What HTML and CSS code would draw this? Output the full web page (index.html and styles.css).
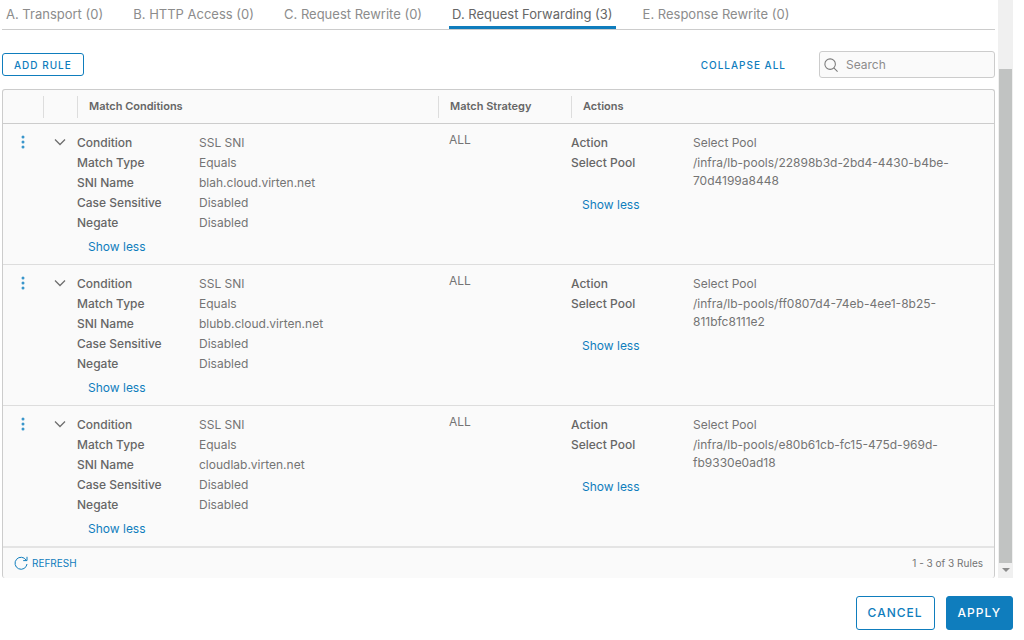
FILE: index.html
```html
<!DOCTYPE html>
<html lang="en">
<head>
    <meta charset="UTF-8">
    <meta name="viewport" content="width=device-width, initial-scale=1.0">
    <title>Load Balancer Rules</title>
    <link rel="stylesheet" href="styles.css">
</head>
<body>
    <main class="dialog">
        <div class="panel">
            <div class="content">
                <nav class="tabs">
                    <a class="tab" href="#transport">A. Transport (0)</a>
                    <a class="tab" href="#access">B. HTTP Access (0)</a>
                    <a class="tab" href="#request">C. Request Rewrite (0)</a>
                    <a class="tab active" href="#forwarding">D. Request Forwarding (3)</a>
                    <a class="tab" href="#response">E. Response Rewrite (0)</a>
                </nav>

                <div class="toolbar">
                    <button class="btn btn-small" type="button">Add Rule</button>
                    <button class="btn-link collapse" type="button">Collapse All</button>
                    <label class="search">
                        <svg class="search-icon" viewBox="0 0 16 16">
                            <circle cx="7" cy="7" r="6"/>
                            <path d="M11.2 11.2L15.5 15.5"/>
                        </svg>
                        <input type="text" placeholder="Search" aria-label="Search">
                    </label>
                </div>

                <div class="datagrid">
                    <table class="rules">
                        <colgroup>
                            <col class="col-menu">
                            <col class="col-expand">
                            <col class="col-match">
                            <col class="col-strategy">
                            <col>
                        </colgroup>
                        <thead>
                            <tr>
                                <th></th>
                                <th></th>
                                <th>Match Conditions</th>
                                <th>Match Strategy</th>
                                <th>Actions</th>
                            </tr>
                        </thead>
                        <tbody>
                            <tr>
                                <td><button class="icon-btn" type="button" aria-label="Rule actions"><svg class="kebab" viewBox="0 0 4 14"><circle cx="2" cy="2" r="1.5"/><circle cx="2" cy="7" r="1.5"/><circle cx="2" cy="12" r="1.5"/></svg></button></td>
                                <td><button class="icon-btn" type="button" aria-label="Collapse rule"><svg class="chevron" viewBox="0 0 12 8"><path d="M1 1.5L6 6.5L11 1.5"/></svg></button></td>
                                <td>
                                    <dl class="props">
                                        <dt>Condition</dt><dd>SSL SNI</dd>
                                        <dt>Match Type</dt><dd>Equals</dd>
                                        <dt>SNI Name</dt><dd>blah.cloud.virten.net</dd>
                                        <dt>Case Sensitive</dt><dd>Disabled</dd>
                                        <dt>Negate</dt><dd>Disabled</dd>
                                    </dl>
                                    <button class="less" type="button">Show less</button>
                                </td>
                                <td class="strategy">ALL</td>
                                <td>
                                    <dl class="props">
                                        <dt>Action</dt><dd>Select Pool</dd>
                                        <dt>Select Pool</dt><dd>/infra/lb-pools/22898b3d-2bd4-4430-b4be-70d4199a8448</dd>
                                    </dl>
                                    <button class="less" type="button">Show less</button>
                                </td>
                            </tr>
                            <tr>
                                <td><button class="icon-btn" type="button" aria-label="Rule actions"><svg class="kebab" viewBox="0 0 4 14"><circle cx="2" cy="2" r="1.5"/><circle cx="2" cy="7" r="1.5"/><circle cx="2" cy="12" r="1.5"/></svg></button></td>
                                <td><button class="icon-btn" type="button" aria-label="Collapse rule"><svg class="chevron" viewBox="0 0 12 8"><path d="M1 1.5L6 6.5L11 1.5"/></svg></button></td>
                                <td>
                                    <dl class="props">
                                        <dt>Condition</dt><dd>SSL SNI</dd>
                                        <dt>Match Type</dt><dd>Equals</dd>
                                        <dt>SNI Name</dt><dd>blubb.cloud.virten.net</dd>
                                        <dt>Case Sensitive</dt><dd>Disabled</dd>
                                        <dt>Negate</dt><dd>Disabled</dd>
                                    </dl>
                                    <button class="less" type="button">Show less</button>
                                </td>
                                <td class="strategy">ALL</td>
                                <td>
                                    <dl class="props">
                                        <dt>Action</dt><dd>Select Pool</dd>
                                        <dt>Select Pool</dt><dd>/infra/lb-pools/ff0807d4-74eb-4ee1-8b25-811bfc8111e2</dd>
                                    </dl>
                                    <button class="less" type="button">Show less</button>
                                </td>
                            </tr>
                            <tr>
                                <td><button class="icon-btn" type="button" aria-label="Rule actions"><svg class="kebab" viewBox="0 0 4 14"><circle cx="2" cy="2" r="1.5"/><circle cx="2" cy="7" r="1.5"/><circle cx="2" cy="12" r="1.5"/></svg></button></td>
                                <td><button class="icon-btn" type="button" aria-label="Collapse rule"><svg class="chevron" viewBox="0 0 12 8"><path d="M1 1.5L6 6.5L11 1.5"/></svg></button></td>
                                <td>
                                    <dl class="props">
                                        <dt>Condition</dt><dd>SSL SNI</dd>
                                        <dt>Match Type</dt><dd>Equals</dd>
                                        <dt>SNI Name</dt><dd>cloudlab.virten.net</dd>
                                        <dt>Case Sensitive</dt><dd>Disabled</dd>
                                        <dt>Negate</dt><dd>Disabled</dd>
                                    </dl>
                                    <button class="less" type="button">Show less</button>
                                </td>
                                <td class="strategy">ALL</td>
                                <td>
                                    <dl class="props">
                                        <dt>Action</dt><dd>Select Pool</dd>
                                        <dt>Select Pool</dt><dd>/infra/lb-pools/e80b61cb-fc15-475d-969d-fb9330e0ad18</dd>
                                    </dl>
                                    <button class="less" type="button">Show less</button>
                                </td>
                            </tr>
                        </tbody>
                    </table>
                    <div class="grid-footer">
                        <button class="refresh" type="button">
                            <svg class="refresh-icon" viewBox="0 0 14 14">
                                <path d="M12.2 4.2A6 6 0 1 0 13 8"/>
                                <path d="M13 0.8V4.6H9.2"/>
                            </svg>
                            REFRESH
                        </button>
                        <span>1 - 3 of 3 Rules</span>
                    </div>
                </div>
            </div>

            <div class="scrollbar">
                <div class="thumb"></div>
                <svg class="scroll-arrow" viewBox="0 0 8 4"><path d="M0 0H8L4 4Z"/></svg>
            </div>
        </div>

        <div class="actions">
            <button class="btn" type="button">Cancel</button>
            <button class="btn btn-primary" type="button">Apply</button>
        </div>
    </main>
</body>
</html>
```
FILE: styles.css
```css
* {
    margin: 0;
    padding: 0;
    box-sizing: border-box;
}

body {
    font-family: Inter, "Open Sans", sans-serif;
    font-size: 12px;
    line-height: 18px;
    color: #747474;
    background: white;
}

button {
    font: inherit;
    color: #0f7dbd;
    background: none;
    border: none;
    cursor: pointer;
}

svg {
    display: block;
    fill: none;
}

.dialog {
    padding: 0 11px 0 2px;
}

.panel {
    display: flex;
    gap: 3px;
}

.content {
    flex: 1;
    min-width: 0;
}

/* tabs */
.tabs {
    display: flex;
    gap: 24px;
    padding-left: 1px;
    border-bottom: 1px solid #cccccc;
}

.tab {
    padding: 5px 3px 6px;
    font-size: 13px;
    color: #8c8c8c;
    text-decoration: none;
    white-space: nowrap;
}

.tab.active {
    color: #666666;
    box-shadow: inset 0 -3px 0 #0f7dbd;
}

/* toolbar */
.toolbar {
    display: flex;
    align-items: center;
    height: 59px;
    padding-top: 10px;
}

.btn {
    height: 34px;
    padding: 0 11px;
    border: 1px solid #0f7dbd;
    border-radius: 3px;
    font-weight: 500;
    letter-spacing: 1px;
    text-transform: uppercase;
}

.btn-small {
    height: 23px;
    font-size: 10px;
}

.btn-primary {
    background: #0f7dbd;
    color: white;
}

.btn-link {
    font-size: 10px;
    font-weight: 500;
    letter-spacing: 1px;
    text-transform: uppercase;
}

.collapse {
    margin-left: auto;
    margin-right: 33px;
}

.search {
    display: flex;
    align-items: center;
    gap: 8px;
    width: 176px;
    height: 27px;
    padding: 0 4px;
    border: 1px solid #cccccc;
    border-radius: 3px;
    background: #fafafa;
}

.search-icon {
    flex: none;
    width: 14px;
    height: 14px;
    stroke: #7a7a7a;
    stroke-width: 1.2;
}

.search input {
    flex: 1;
    min-width: 0;
    border: none;
    outline: none;
    background: none;
    font: inherit;
    color: inherit;
}

.search input::placeholder {
    color: #8c8c8c;
}

/* rules table */
.datagrid {
    border: 1px solid #cccccc;
    border-bottom: none;
    border-radius: 3px;
    background: #fafafa;
}

.rules {
    width: 100%;
    table-layout: fixed;
    border-collapse: separate;
    border-spacing: 0;
}

.col-menu {
    width: 40px;
}

.col-expand {
    width: 34px;
}

.col-match {
    width: 361px;
}

.col-strategy {
    width: 133px;
}

.rules th {
    height: 34px;
    padding: 0 12px 2px;
    border-bottom: 1px solid #cccccc;
    font-size: 11px;
    font-weight: 600;
    text-align: left;
    color: #666666;
    background: linear-gradient(#dddddd, #dddddd) left center / 1px 22px no-repeat;
}

.rules th:first-child {
    background: none;
}

.rules td {
    padding: 9px 0 8px;
    border-bottom: 1px solid #dddddd;
    vertical-align: top;
}

.rules tbody tr:last-child td {
    border-bottom: 2px solid #e4e4e4;
}

.rules .strategy {
    padding: 7px 11px;
}

.icon-btn {
    display: flex;
    justify-content: center;
    align-items: center;
    width: 100%;
    height: 18px;
}

.kebab {
    width: 4px;
    height: 14px;
    fill: #3a96cb;
}

.chevron {
    width: 12px;
    height: 8px;
    stroke: #6e6e6e;
    stroke-width: 1.3;
}

.props {
    display: grid;
    grid-template-columns: 122px 1fr;
    padding-right: 32px;
}

.props dt,
.props dd {
    padding: 1px 0;
}

.props dt {
    font-weight: 500;
    color: #666666;
}

.less {
    display: block;
    margin: 5px 0 0 11px;
}

.grid-footer {
    display: flex;
    justify-content: space-between;
    align-items: center;
    height: 30px;
    padding: 0 11px;
    font-size: 10px;
}

.refresh {
    display: flex;
    align-items: center;
    gap: 4px;
}

.refresh-icon {
    width: 14px;
    height: 14px;
    stroke: #0f7dbd;
}

/* scrollbar */
.scrollbar {
    display: flex;
    flex-direction: column;
    align-items: center;
    gap: 5px;
    width: 15px;
    padding: 69px 0 6px;
    background: #f0f0f0;
}

.thumb {
    flex: 1;
    width: 13px;
    background: #c1c3c2;
}

.scroll-arrow {
    width: 8px;
    height: 4px;
    fill: #8c8c8c;
}

/* dialog buttons */
.actions {
    display: flex;
    justify-content: flex-end;
    gap: 11px;
    padding-top: 18px;
}
```
